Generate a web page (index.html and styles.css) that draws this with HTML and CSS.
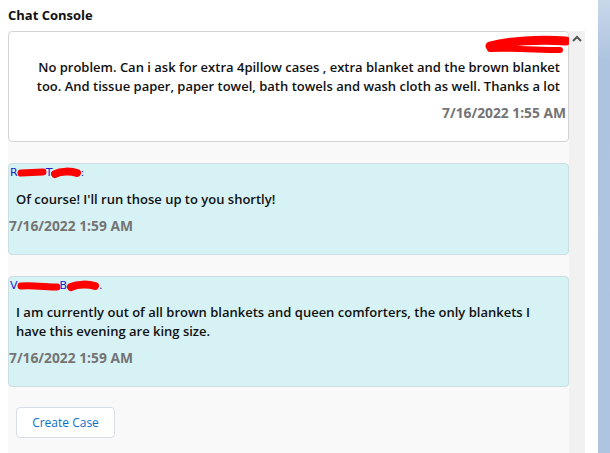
FILE: index.html
```html
<!DOCTYPE html>
<html>
<head>
<meta charset="utf-8">
<link rel="stylesheet" href="styles.css">
</head>
<body>
<div class="layout">
  <div class="main">
    <div class="title">Chat Console</div>
    <div class="scroller">
      <div class="content">
        <div class="msg msg-out">
          <div class="redact-top">
            <svg width="86" height="20" viewBox="0 0 86 20"><path d="M6 11 C25 6, 55 4, 82 6" stroke="#f00" stroke-width="9" stroke-linecap="round" fill="none"/><path d="M6 14 C30 13, 55 15, 76 15" stroke="#f00" stroke-width="6" stroke-linecap="round" fill="none"/></svg>
          </div>
          <div class="text text-right">No problem. Can i ask for extra 4pillow cases , extra blanket and the brown blanket too. And tissue paper, paper towel, bath towels and wash cloth as well. Thanks a lot</div>
          <div class="time time-right">7/16/2022 1:55 AM</div>
        </div>
        <div class="msg msg-in msg-short">
          <div class="name">R<svg class="blob" width="30" height="12" viewBox="0 0 30 12"><path d="M4 6 L26 5" stroke="#f00" stroke-width="7" stroke-linecap="round"/></svg>T<svg class="blob" width="30" height="12" viewBox="0 0 30 12"><path d="M4 7 C10 4, 20 4, 26 6" stroke="#f00" stroke-width="8" stroke-linecap="round" fill="none"/></svg>:</div>
          <div class="text">Of course! I'll run those up to you shortly!</div>
          <div class="time">7/16/2022 1:59 AM</div>
        </div>
        <div class="msg msg-in">
          <div class="name">V<svg class="blob" width="44" height="12" viewBox="0 0 44 12"><path d="M4 6 C15 5, 30 7, 40 7" stroke="#f00" stroke-width="7" stroke-linecap="round" fill="none"/></svg>B<svg class="blob" width="34" height="12" viewBox="0 0 34 12"><path d="M5 7 C12 4, 22 4, 29 6" stroke="#f00" stroke-width="8" stroke-linecap="round" fill="none"/></svg>.</div>
          <div class="text">I am currently out of all brown blankets and queen comforters, the only blankets I have this evening are king size.</div>
          <div class="time">7/16/2022 1:59 AM</div>
        </div>
        <div class="actions">
          <button class="btn">Create Case</button>
        </div>
      </div>
      <div class="scrollbar">
        <svg width="16" height="12" viewBox="0 0 16 12"><path d="M4 8 L8 4 L12 8" stroke="#555" stroke-width="2" fill="none"/></svg>
      </div>
    </div>
  </div>
  <div class="strip"></div>
</div>
</body>
</html>
```
FILE: styles.css
```css
html, body {
  margin: 0;
  padding: 0;
  background: #fff;
  height: 453px;
  overflow: hidden;
}
.layout {
  display: flex;
  height: 453px;
}
.main {
  width: 577px;
  margin-left: 8px;
  display: flex;
  flex-direction: column;
}
.title {
  font-family: "Open Sans", sans-serif;
  font-weight: 700;
  font-size: 13px;
  line-height: 18px;
  color: #111;
  padding-top: 6px;
  height: 25px;
}
.scroller {
  flex: 1;
  display: flex;
  background: #f9f9f9;
}
.content {
  width: 561px;
  display: flex;
  flex-direction: column;
  gap: 21px;
}
.scrollbar {
  width: 16px;
  background: #f1f1f1;
  padding-top: 2px;
}
.scrollbar svg {
  display: block;
}
.msg {
  border: 1px solid #d4d4d4;
  border-radius: 4px;
  box-sizing: border-box;
}
.msg-out {
  background: #fff;
  height: 111px;
  padding: 3px 2px 0 14px;
}
.msg-in {
  background: #d7f2f5;
  border-color: #c9dfe2;
  height: 111px;
  padding: 2px 20px 0 0;
}
.msg-short {
  height: 92px;
}
.redact-top {
  display: flex;
  justify-content: flex-end;
  height: 23px;
  margin-right: -4px;
}
.text {
  font-family: "Open Sans", sans-serif;
  font-weight: 600;
  font-size: 13px;
  line-height: 19px;
  color: #111;
  padding-left: 7px;
}
.text-right {
  text-align: right;
  padding-right: 6px;
}
.time {
  font-family: "Open Sans", sans-serif;
  font-weight: 700;
  font-size: 13.8px;
  line-height: 19px;
  color: #747474;
  margin-top: 7px;
}
.time-right {
  text-align: right;
}
.name {
  font-family: "DejaVu Sans", sans-serif;
  font-size: 11px;
  line-height: 14px;
  color: #2020d0;
  height: 14px;
  margin-bottom: 10px;
  display: flex;
  align-items: center;
  padding-left: 1px;
}
.blob {
  display: block;
  margin: 0 -1px;
}
.actions {
  padding-left: 8px;
  margin-top: -1px;
}
.btn {
  font-family: "Open Sans", sans-serif;
  font-size: 12px;
  color: #0b6fc8;
  background: #fff;
  border: 1px solid #d8dde6;
  border-radius: 4px;
  width: 99px;
  height: 31px;
  padding: 0;
}
.strip {
  width: 12px;
  margin-left: 13px;
  background: linear-gradient(180deg, #c8d8ea 0px, #adc3df 60px, #aec4e0 100%);
}
```
